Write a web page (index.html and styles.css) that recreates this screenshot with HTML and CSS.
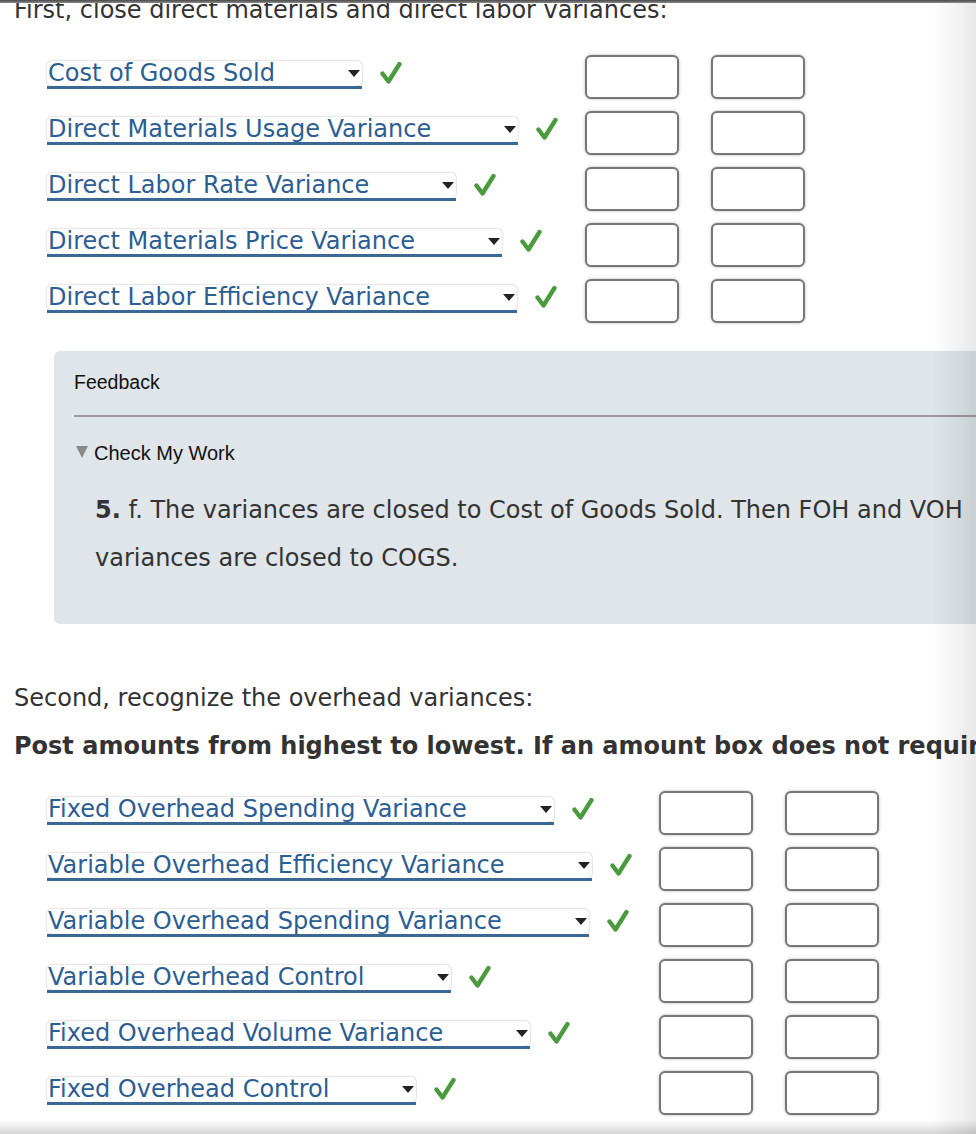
FILE: index.html
```html
<!DOCTYPE html>
<html lang="en">
<head>
<meta charset="utf-8">
<title>Variances</title>
<link rel="stylesheet" href="styles.css">
</head>
<body>
<div class="topbar"></div>
<div class="page">
  <p class="line">First, close direct materials and direct labor variances:</p>

  <div class="entries">
    <div class="choice"><span class="select">Cost of Goods Sold<i class="arrow"></i></span><svg class="check" viewBox="0 0 22 24"><polyline points="2.5,12.5 8.5,20.5 19.5,3" /></svg></div>
    <span class="amount"></span><span class="amount"></span>

    <div class="choice"><span class="select">Direct Materials Usage Variance<i class="arrow"></i></span><svg class="check" viewBox="0 0 22 24"><polyline points="2.5,12.5 8.5,20.5 19.5,3" /></svg></div>
    <span class="amount"></span><span class="amount"></span>

    <div class="choice"><span class="select">Direct Labor Rate Variance<i class="arrow"></i></span><svg class="check" viewBox="0 0 22 24"><polyline points="2.5,12.5 8.5,20.5 19.5,3" /></svg></div>
    <span class="amount"></span><span class="amount"></span>

    <div class="choice"><span class="select">Direct Materials Price Variance<i class="arrow"></i></span><svg class="check" viewBox="0 0 22 24"><polyline points="2.5,12.5 8.5,20.5 19.5,3" /></svg></div>
    <span class="amount"></span><span class="amount"></span>

    <div class="choice"><span class="select">Direct Labor Efficiency Variance<i class="arrow"></i></span><svg class="check" viewBox="0 0 22 24"><polyline points="2.5,12.5 8.5,20.5 19.5,3" /></svg></div>
    <span class="amount"></span><span class="amount"></span>
  </div>

  <section class="feedback">
    <div class="fb-title">Feedback</div>
    <hr class="fb-rule">
    <div class="fb-toggle"><i class="tri"></i>Check My Work</div>
    <p class="fb-text"><b>5.</b> f. The variances are closed to Cost of Goods Sold. Then FOH and VOH variances are closed to COGS.</p>
  </section>

  <p class="line second">Second, recognize the overhead variances:</p>
  <p class="line bold">Post amounts from highest to lowest. If an amount box does not require an entry, leave it blank.</p>

  <div class="entries">
    <div class="choice"><span class="select">Fixed Overhead Spending Variance<i class="arrow"></i></span><svg class="check" viewBox="0 0 22 24"><polyline points="2.5,12.5 8.5,20.5 19.5,3" /></svg></div>
    <span class="amount"></span><span class="amount"></span>

    <div class="choice"><span class="select">Variable Overhead Efficiency Variance<i class="arrow"></i></span><svg class="check" viewBox="0 0 22 24"><polyline points="2.5,12.5 8.5,20.5 19.5,3" /></svg></div>
    <span class="amount"></span><span class="amount"></span>

    <div class="choice"><span class="select">Variable Overhead Spending Variance<i class="arrow"></i></span><svg class="check" viewBox="0 0 22 24"><polyline points="2.5,12.5 8.5,20.5 19.5,3" /></svg></div>
    <span class="amount"></span><span class="amount"></span>

    <div class="choice"><span class="select">Variable Overhead Control<i class="arrow"></i></span><svg class="check" viewBox="0 0 22 24"><polyline points="2.5,12.5 8.5,20.5 19.5,3" /></svg></div>
    <span class="amount"></span><span class="amount"></span>

    <div class="choice"><span class="select">Fixed Overhead Volume Variance<i class="arrow"></i></span><svg class="check" viewBox="0 0 22 24"><polyline points="2.5,12.5 8.5,20.5 19.5,3" /></svg></div>
    <span class="amount"></span><span class="amount"></span>

    <div class="choice"><span class="select">Fixed Overhead Control<i class="arrow"></i></span><svg class="check" viewBox="0 0 22 24"><polyline points="2.5,12.5 8.5,20.5 19.5,3" /></svg></div>
    <span class="amount"></span><span class="amount"></span>
  </div>
</div>
<div class="edge-right"></div>
<div class="edge-bottom"></div>
</body>
</html>
```

FILE: styles.css
```css
html, body {
  margin: 0;
  padding: 0;
  overflow: hidden;
  background: #fff;
}

body {
  font-family: "DejaVu Sans", Verdana, sans-serif;
  color: #333;
  height: 1134px;
}

.page {
  padding-left: 14px;
  margin-top: -14px;
}

.line {
  margin: 0;
  font-size: 24px;
  line-height: 48px;
  white-space: nowrap;
  color: #333;
}

.line.second {
  margin-top: 50px;
}

.line.bold {
  font-weight: bold;
}

.entries {
  display: grid;
  grid-template-columns: max-content 94px 94px;
  grid-auto-rows: 44px;
  row-gap: 12px;
  column-gap: 32px;
  margin: 21px 0 0 33px;
}

.choice {
  display: flex;
  align-items: flex-start;
  gap: 18px;
  padding-top: 6px;
  margin-right: -5px;
}

.select {
  position: relative;
  display: inline-block;
  height: 25px;
  padding: 0 87px 0 1px;
  background: #fff;
  border-radius: 5px;
  box-shadow: 0 0 2px rgba(0, 0, 0, 0.35);
  font-size: 24px;
  line-height: 25px;
  color: #2b5e93;
  white-space: nowrap;
}

.select::after {
  content: "";
  position: absolute;
  left: 0;
  right: 0;
  bottom: -3px;
  height: 3px;
  background: #3a6795;
}

.arrow {
  position: absolute;
  right: 2px;
  top: 9px;
  width: 0;
  height: 0;
  border-left: 6.5px solid transparent;
  border-right: 6.5px solid transparent;
  border-top: 7px solid #222;
}

.check {
  width: 22px;
  height: 24px;
  flex: none;
}

.check polyline {
  fill: none;
  stroke: #4c9a3f;
  stroke-width: 4.4;
  stroke-linecap: round;
  stroke-linejoin: round;
}

.amount {
  box-sizing: border-box;
  width: 94px;
  height: 44px;
  border: 2px solid #777;
  border-radius: 6px;
  background: #fff;
  box-shadow: 0 0 3px rgba(0, 0, 0, 0.3);
}

.feedback {
  margin: 28px -80px 0 40px;
  background: #dfe5e8;
  border-radius: 6px;
  padding: 20px 0 42px 20px;
  font-family: "Liberation Sans", Arial, sans-serif;
  color: #111;
}

.fb-title {
  font-size: 19.5px;
  line-height: 23px;
}

.fb-rule {
  margin: 21px 0 0 0;
  border: 0;
  height: 2px;
  background: #9a9c9e;
}

.fb-toggle {
  margin-top: 25px;
  font-size: 20px;
  line-height: 23px;
  display: flex;
  align-items: flex-start;
}

.tri {
  width: 0;
  height: 0;
  margin: 4px 6px 0 2px;
  border-left: 6px solid transparent;
  border-right: 6px solid transparent;
  border-top: 12px solid #8a8a8a;
  filter: blur(0.5px);
}

.fb-text {
  margin: 21px 0 0 21px;
  width: 900px;
  font-family: "DejaVu Sans", Verdana, sans-serif;
  font-size: 24px;
  line-height: 48px;
  color: #333;
}

.topbar {
  position: fixed;
  top: 0;
  left: 0;
  right: 0;
  height: 3px;
  background: linear-gradient(#4a4a4a, #8a8a8a);
  z-index: 5;
}

.edge-right {
  position: fixed;
  top: 0;
  right: 0;
  bottom: 0;
  width: 44px;
  background: linear-gradient(to right, rgba(0, 0, 0, 0), rgba(0, 0, 0, 0.09));
  pointer-events: none;
  z-index: 4;
}

.edge-bottom {
  position: fixed;
  left: 0;
  right: 0;
  bottom: 0;
  height: 14px;
  background: linear-gradient(rgba(0, 0, 0, 0), rgba(0, 0, 0, 0.16));
  pointer-events: none;
  z-index: 4;
}
```
